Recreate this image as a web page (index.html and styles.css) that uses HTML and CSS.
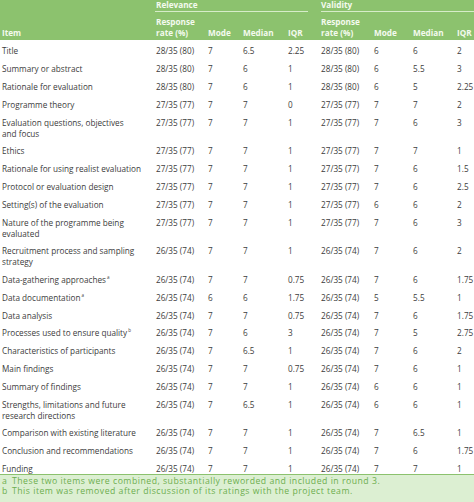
FILE: index.html
```html
<!DOCTYPE html>
<html lang="en">
<head>
<meta charset="utf-8">
<title>Relevance and validity ratings</title>
<link rel="stylesheet" href="styles.css">
</head>
<body>
<table class="ratings">
  <colgroup>
    <col class="c-item"><col class="c-rate"><col class="c-mode"><col class="c-med"><col class="c-iqr">
    <col class="c-rate2"><col class="c-mode2"><col class="c-med2"><col class="c-iqr2">
  </colgroup>
  <thead>
    <tr class="group-row">
      <th></th>
      <th colspan="4"><div class="group group-rel">Relevance</div></th>
      <th colspan="4"><div class="group">Validity</div></th>
    </tr>
    <tr class="label-row">
      <th>Item</th>
      <th>Response<br>rate (%)</th>
      <th>Mode</th>
      <th>Median</th>
      <th>IQR</th>
      <th>Response<br>rate (%)</th>
      <th>Mode</th>
      <th>Median</th>
      <th>IQR</th>
    </tr>
  </thead>
  <tbody>
    <tr class="first"><td>Title</td><td>28/35 (80)</td><td>7</td><td>6.5</td><td>2.25</td><td>28/35 (80)</td><td>6</td><td>6</td><td>2</td></tr>
    <tr><td>Summary or abstract</td><td>28/35 (80)</td><td>7</td><td>6</td><td>1</td><td>28/35 (80)</td><td>6</td><td>5.5</td><td>3</td></tr>
    <tr><td>Rationale for evaluation</td><td>28/35 (80)</td><td>7</td><td>6</td><td>1</td><td>28/35 (80)</td><td>6</td><td>5</td><td>2.25</td></tr>
    <tr><td>Programme theory</td><td>27/35 (77)</td><td>7</td><td>7</td><td>0</td><td>27/35 (77)</td><td>7</td><td>7</td><td>2</td></tr>
    <tr><td>Evaluation questions, objectives<br>and focus</td><td>27/35 (77)</td><td>7</td><td>7</td><td>1</td><td>27/35 (77)</td><td>7</td><td>6</td><td>3</td></tr>
    <tr><td>Ethics</td><td>27/35 (77)</td><td>7</td><td>7</td><td>1</td><td>27/35 (77)</td><td>7</td><td>7</td><td>1</td></tr>
    <tr><td>Rationale for using realist evaluation</td><td>27/35 (77)</td><td>7</td><td>7</td><td>1</td><td>27/35 (77)</td><td>7</td><td>6</td><td>1.5</td></tr>
    <tr><td>Protocol or evaluation design</td><td>27/35 (77)</td><td>7</td><td>7</td><td>1</td><td>27/35 (77)</td><td>7</td><td>6</td><td>2.5</td></tr>
    <tr><td>Setting(s) of the evaluation</td><td>27/35 (77)</td><td>7</td><td>7</td><td>1</td><td>27/35 (77)</td><td>6</td><td>6</td><td>2</td></tr>
    <tr><td>Nature of the programme being<br>evaluated</td><td>27/35 (77)</td><td>7</td><td>7</td><td>1</td><td>27/35 (77)</td><td>7</td><td>6</td><td>3</td></tr>
    <tr><td>Recruitment process and sampling<br>strategy</td><td>26/35 (74)</td><td>7</td><td>7</td><td>1</td><td>26/35 (74)</td><td>7</td><td>6</td><td>2</td></tr>
    <tr><td>Data-gathering approaches<sup>a</sup></td><td>26/35 (74)</td><td>7</td><td>7</td><td>0.75</td><td>26/35 (74)</td><td>7</td><td>6</td><td>1.75</td></tr>
    <tr><td>Data documentation<sup>a</sup></td><td>26/35 (74)</td><td>6</td><td>6</td><td>1.75</td><td>26/35 (74)</td><td>5</td><td>5.5</td><td>1</td></tr>
    <tr><td>Data analysis</td><td>26/35 (74)</td><td>7</td><td>7</td><td>0.75</td><td>26/35 (74)</td><td>7</td><td>6</td><td>1.75</td></tr>
    <tr><td>Processes used to ensure quality<sup>b</sup></td><td>26/35 (74)</td><td>7</td><td>6</td><td>3</td><td>26/35 (74)</td><td>7</td><td>5</td><td>2.75</td></tr>
    <tr><td>Characteristics of participants</td><td>26/35 (74)</td><td>7</td><td>6.5</td><td>1</td><td>26/35 (74)</td><td>7</td><td>6</td><td>2</td></tr>
    <tr><td>Main findings</td><td>26/35 (74)</td><td>7</td><td>7</td><td>0.75</td><td>26/35 (74)</td><td>7</td><td>6</td><td>1</td></tr>
    <tr><td>Summary of findings</td><td>26/35 (74)</td><td>7</td><td>7</td><td>1</td><td>26/35 (74)</td><td>6</td><td>6</td><td>1</td></tr>
    <tr><td>Strengths, limitations and future<br>research directions</td><td>26/35 (74)</td><td>7</td><td>6.5</td><td>1</td><td>26/35 (74)</td><td>6</td><td>6</td><td>1</td></tr>
    <tr><td>Comparison with existing literature</td><td>26/35 (74)</td><td>7</td><td>7</td><td>1</td><td>26/35 (74)</td><td>7</td><td>6.5</td><td>1</td></tr>
    <tr><td>Conclusion and recommendations</td><td>26/35 (74)</td><td>7</td><td>7</td><td>1</td><td>26/35 (74)</td><td>7</td><td>6</td><td>1.75</td></tr>
    <tr class="last"><td>Funding</td><td>26/35 (74)</td><td>7</td><td>7</td><td>1</td><td>26/35 (74)</td><td>7</td><td>7</td><td>1</td></tr>
  </tbody>
</table>
<div class="notes">
  <div class="note"><span class="mark">a</span><span>These two items were combined, substantially reworded and included in round 3.</span></div>
  <div class="note"><span class="mark">b</span><span>This item was removed after discussion of its ratings with the project team.</span></div>
</div>
</body>
</html>
```
FILE: styles.css
```css
html, body {
  margin: 0;
  padding: 0;
  overflow: hidden;
  background: #ffffff;
}
body {
  width: 490px;
  font-family: "Open Sans", "Noto Sans", sans-serif;
  font-size: 8.2px;
  color: #3c3c3c;
}
.ratings {
  border-collapse: collapse;
  table-layout: fixed;
  width: 490px;
}
.c-item { width: 156px; }
.c-rate { width: 52px; }
.c-mode { width: 35px; }
.c-med { width: 45px; }
.c-iqr { width: 33px; }
.c-rate2 { width: 53px; }
.c-mode2 { width: 39px; }
.c-med2 { width: 44px; }
.c-iqr2 { width: 33px; }

.ratings th, .ratings td {
  padding: 0;
  text-align: left;
  white-space: nowrap;
}
.ratings thead th {
  background: #8cc26e;
  color: #f4faef;
  font-weight: 700;
}
.group-row th {
  line-height: 9px;
  vertical-align: top;
}
.group {
  padding-bottom: 2px;
  border-bottom: 1px solid #d6ecc9;
}
.group-rel {
  margin-right: 13px;
  margin-left: -1px;
  padding-left: 1px;
}
.label-row th {
  line-height: 10.6px;
  vertical-align: bottom;
  padding-top: 5px;
  padding-bottom: 1.8px;
}
.label-row th:first-child { padding-left: 2px; }

.ratings tbody td {
  line-height: 11px;
  padding-top: 3.4px;
  padding-bottom: 3.4px;
  vertical-align: top;
}
.ratings tbody td:first-child { padding-left: 2px; }
.ratings tbody tr.first td { padding-top: 5.5px; }
.ratings tbody tr.last td { padding-bottom: 0; }

sup {
  font-size: 4.5px;
  line-height: 0;
  vertical-align: 4px;
  margin-left: 1px;
}

.notes {
  background: #dcefd2;
  border-top: 1px solid #8cc26e;
  color: #6cae4e;
  font-size: 8.7px;
  letter-spacing: 0.5px;
  line-height: 9.5px;
  padding: 2.2px 0 20px 2px;
}
.note {
  display: flex;
  white-space: nowrap;
}
.mark {
  width: 10px;
  flex: none;
}
```
